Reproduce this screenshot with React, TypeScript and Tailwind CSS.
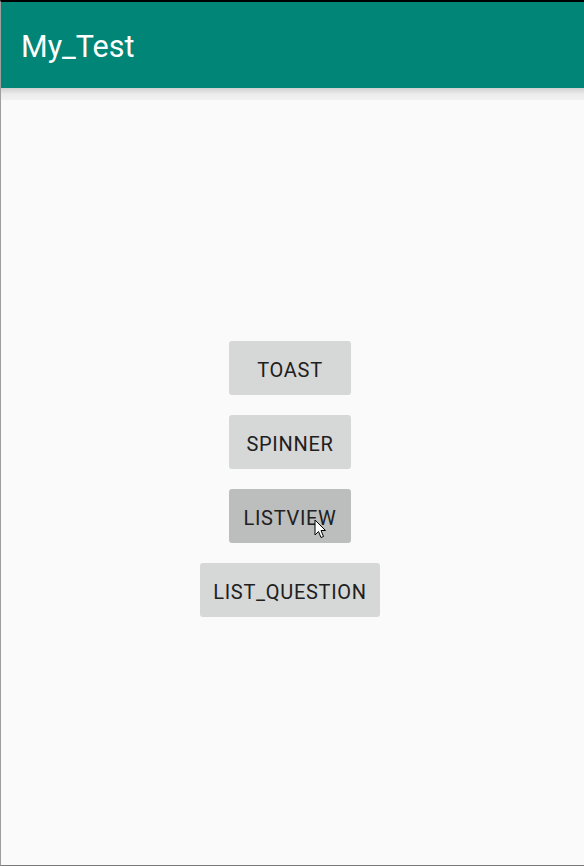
const buttons = ['TOAST', 'SPINNER', 'LISTVIEW', 'LIST_QUESTION'];

function Cursor() {
  return (
    <svg width="13" height="20" viewBox="0 0 13 20" className="absolute left-[85px] top-[30px]">
      <path
        d="M1 1 L1 16 L4.5 12.5 L7 18.5 L9.5 17.5 L7 11.5 L11.5 11.5 Z"
        fill="white"
        stroke="black"
        strokeWidth="1"
        strokeLinejoin="round"
      />
    </svg>
  );
}

export default function App() {
  return (
    <div className="w-[584px] h-[866px] flex flex-col bg-[#fafafa] border-t-2 border-t-black border-l border-l-[#9e9e9e] border-b border-b-[#7a7a7a] font-['Roboto',sans-serif]">
      <header className="h-[86px] shrink-0 bg-[#008577] flex items-center pl-[20px]">
        <h1 className="text-[30.5px] text-white leading-none pt-[4px]">My_Test</h1>
      </header>
      <div className="h-[12px] shrink-0 bg-gradient-to-b from-[#cfcfcf] via-[#ececec] to-[#f1f1f1]" />
      <main className="flex-1 flex flex-col items-center justify-center gap-[20px] pb-[8px] pr-[5px]">
        {buttons.map((label) => (
          <button
            key={label}
            className={`relative h-[54px] px-[13px] pt-[4px] min-w-[122px] rounded-[3px] text-[20px] font-normal tracking-[0.7px] text-[#202020] ${
              label === 'LISTVIEW' ? 'bg-[#bcbdbd]' : 'bg-[#d6d7d7]'
            }`}
          >
            {label}
            {label === 'LISTVIEW' && <Cursor />}
          </button>
        ))}
      </main>
    </div>
  );
}
